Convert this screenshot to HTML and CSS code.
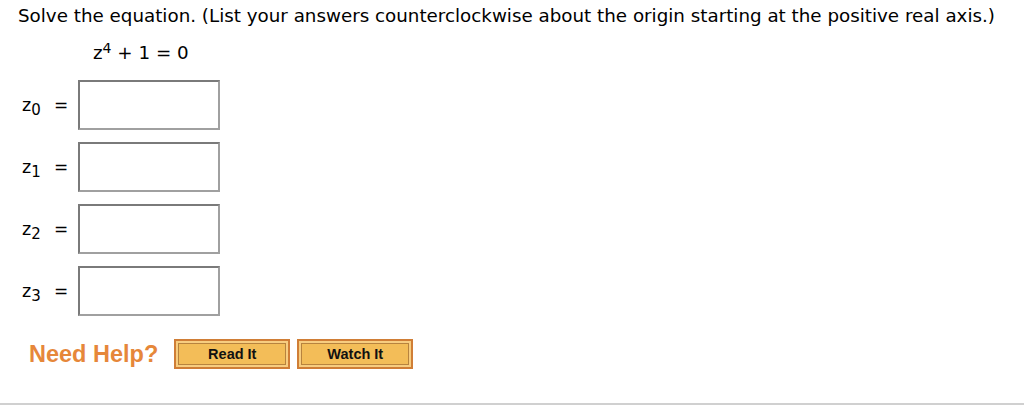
FILE: index.html
```html
<!DOCTYPE html>
<html lang="en">
<head>
    <meta charset="UTF-8">
    <title>Solve the equation</title>
    <link rel="stylesheet" href="styles.css">
</head>
<body>

    <div class="question">
        <p class="prompt">Solve the equation. (List your answers counterclockwise about the origin starting at the positive real axis.)</p>

        <p class="equation"><i>z</i><sup>4</sup> + 1 = 0</p>

        <!-- Answer rows -->
        <div class="answers">
            <div class="row">
                <span class="label"><i>z</i><sub>0</sub></span>
                <span class="eq">=</span>
                <input type="text" class="answer">
            </div>
            <div class="row">
                <span class="label"><i>z</i><sub>1</sub></span>
                <span class="eq">=</span>
                <input type="text" class="answer">
            </div>
            <div class="row">
                <span class="label"><i>z</i><sub>2</sub></span>
                <span class="eq">=</span>
                <input type="text" class="answer">
            </div>
            <div class="row">
                <span class="label"><i>z</i><sub>3</sub></span>
                <span class="eq">=</span>
                <input type="text" class="answer">
            </div>
        </div>

        <!-- Help -->
        <div class="help">
            <span class="need-help">Need Help?</span>
            <button class="help-btn">Read It</button>
            <button class="help-btn">Watch It</button>
        </div>
    </div>

</body>
</html>
```

FILE: styles.css
```css
/* General */
body {
    margin: 0;
    padding: 0;
    background-color: #fff;
    font-family: "DejaVu Sans", Verdana, sans-serif;
    color: #000;
}

.question {
    padding: 3px 0 0 18px;
    border-bottom: 2px solid #d0d0d0;
    height: 405px;
    box-sizing: border-box;
}

.prompt {
    margin: 0;
    font-size: 18.3px;
    line-height: 26px;
}

.equation {
    margin: 14px 0 0 75px;
    font-size: 18.3px;
    line-height: 20px;
}

.equation i,
.label i {
    font-style: normal;
}

.equation sup {
    font-size: 14px;
    vertical-align: 6px;
    line-height: 0;
}

/* Answer rows */
.answers {
    margin-top: 17px;
}

.row {
    display: flex;
    align-items: center;
    height: 50px;
    margin-top: 12px;
}

.row:first-child {
    margin-top: 0;
}

.label {
    width: 32px;
    padding-left: 4px;
    font-size: 17.5px;
}

.label sub {
    font-size: 15px;
    vertical-align: -4px;
    line-height: 0;
}

.eq {
    width: 24px;
    font-size: 17px;
}

.answer {
    width: 142px;
    height: 50px;
    box-sizing: border-box;
    margin: 0;
    border: 2px solid #a0a0a0;
    border-top-color: #7a7a7a;
    border-left-color: #7a7a7a;
    background: #fff;
}

/* Help section */
.help {
    display: flex;
    align-items: center;
    margin-top: 23px;
    padding-left: 11px;
}

.need-help {
    font-family: "Liberation Sans", Arial, sans-serif;
    font-weight: bold;
    font-size: 23.5px;
    color: #e6873a;
    margin-right: 16px;
}

.help-btn {
    width: 116px;
    height: 30px;
    margin-right: 7px;
    padding: 0;
    font-family: "Liberation Sans", Arial, sans-serif;
    font-weight: bold;
    font-size: 14.5px;
    color: #111;
    background-color: #f3bd58;
    border: 2px solid #d07e36;
    box-shadow: inset 0 0 0 2px #f7cd80, inset 0 0 0 3px #b7833e;
    cursor: pointer;
}
```
